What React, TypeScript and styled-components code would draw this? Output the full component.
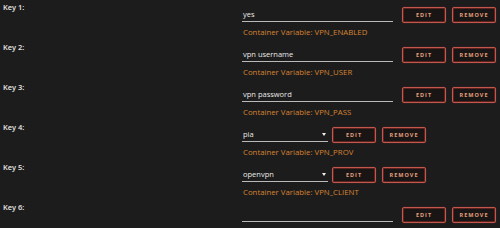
import React from 'react';
import styled, { createGlobalStyle } from 'styled-components';

const GlobalStyle = createGlobalStyle`
  html, body {
    margin: 0;
    padding: 0;
    background: #1d1c1d;
  }
  body {
    font-family: "Open Sans", "Liberation Sans", sans-serif;
    overflow: hidden;
  }
`;

const StyledWrapper = styled.div`
  width: 500px;
  height: 228px;
  overflow: hidden;
  background: #1d1c1d;
  display: flex;
  flex-direction: column;
`;

const StyledRow = styled.div`
  display: grid;
  grid-template-columns: 242px 1fr;
  height: 40px;
  flex-shrink: 0;
`;

const StyledLabel = styled.div`
  padding: 2px 0 0 3px;
  font-size: 7.5px;
  font-weight: 600;
  color: #e6e6e6;
`;

const FieldColumn = styled.div`
  display: flex;
  flex-direction: column;
  padding-top: 7px;
`;

const ControlLine = styled.div`
  display: flex;
  align-items: flex-start;
`;

const StyledInput = styled.div<{ $width: number }>`
  position: relative;
  width: ${({ $width }) => $width}px;
  height: 15px;
  border-bottom: 1px solid #b9b9b9;
  box-sizing: border-box;
  font-size: 7.5px;
  color: #e8e8e8;
  line-height: 15px;
  padding-left: 1px;
`;

const SelectArrow = styled.span`
  position: absolute;
  right: 2px;
  top: 6px;
  width: 0;
  height: 0;
  border-left: 2px solid transparent;
  border-right: 2px solid transparent;
  border-top: 3px solid #f0f0f0;
`;

const ButtonGroup = styled.div<{ $offset: number }>`
  display: flex;
  gap: 6px;
  margin-left: ${({ $offset }) => $offset}px;
`;

const StyledButton = styled.button`
  width: 44px;
  height: 16px;
  padding: 0;
  background: #1a1515;
  border: 1.5px solid #c4574d;
  border-radius: 2px;
  box-shadow: inset 0 0 0 1px #5a2320, 0 0 1px #8a3530;
  color: #e3a07c;
  font-family: "Open Sans", "Liberation Sans", sans-serif;
  font-size: 5.5px;
  font-weight: 700;
  letter-spacing: 1px;
  text-transform: uppercase;
  cursor: pointer;
`;

const StyledHelper = styled.div`
  margin-top: 4px;
  padding-left: 1px;
  font-size: 7.8px;
  color: #d58330;
`;

interface KeyRow {
  label: string;
  value: string;
  variable?: string;
  select?: boolean;
}

const rows: KeyRow[] = [
  { label: 'Key 1:', value: 'yes', variable: 'VPN_ENABLED' },
  { label: 'Key 2:', value: 'vpn username', variable: 'VPN_USER' },
  { label: 'Key 3:', value: 'vpn password', variable: 'VPN_PASS' },
  { label: 'Key 4:', value: 'pia', variable: 'VPN_PROV', select: true },
  { label: 'Key 5:', value: 'openvpn', variable: 'VPN_CLIENT', select: true },
  { label: 'Key 6:', value: '' },
];

const App: React.FC = () => {
  return (
    <>
      <GlobalStyle />
      <StyledWrapper>
        {rows.map((row) => (
          <StyledRow key={row.label}>
            <StyledLabel>{row.label}</StyledLabel>
            <FieldColumn>
              <ControlLine>
                <StyledInput $width={row.select ? 86 : 151}>
                  {row.value}
                  {row.select && <SelectArrow />}
                </StyledInput>
                <ButtonGroup $offset={row.select ? 4 : 9}>
                  <StyledButton>Edit</StyledButton>
                  <StyledButton>Remove</StyledButton>
                </ButtonGroup>
              </ControlLine>
              {row.variable && (
                <StyledHelper>Container Variable: {row.variable}</StyledHelper>
              )}
            </FieldColumn>
          </StyledRow>
        ))}
      </StyledWrapper>
    </>
  );
};

export default App;
